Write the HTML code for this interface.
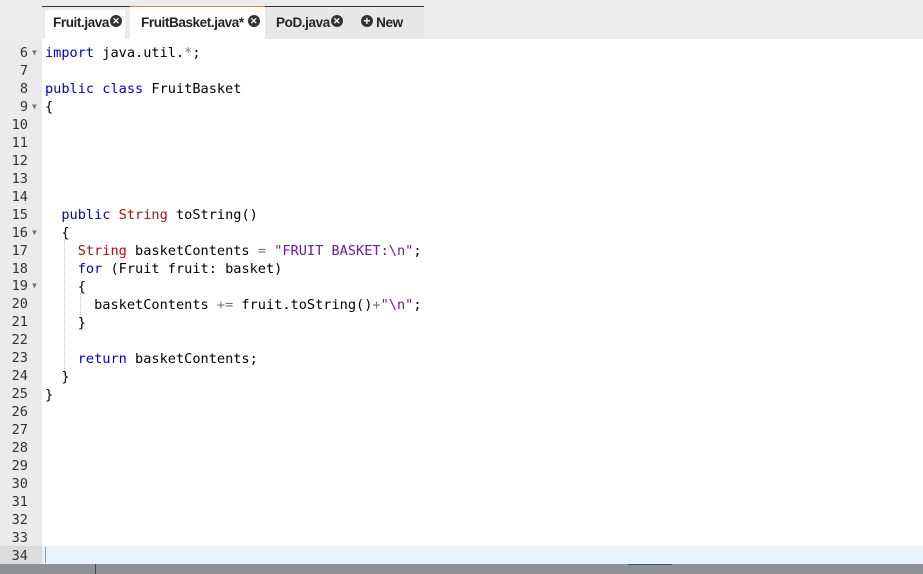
<!DOCTYPE html>
<html><head><style>
*{margin:0;padding:0;box-sizing:border-box}
body{width:923px;height:574px;overflow:hidden;background:#fff;position:relative;font-family:"DejaVu Sans Mono",monospace}
#top{position:absolute;left:0;top:0;width:923px;height:39px;background:#ececec}
#tline{position:absolute;left:42px;top:6px;width:382px;height:1px;background:#333}
#oline{position:absolute;left:130px;top:6px;width:135px;height:2px;background:#e0823c}
.tab{position:absolute;font-family:"Liberation Sans",sans-serif;font-weight:bold;font-size:13.5px;color:#222;top:7px;height:32px;line-height:31px;padding-left:10px;white-space:nowrap;letter-spacing:-0.4px}
.x{display:inline-block;width:12px;height:12px;border-radius:50%;background:#333;color:#fff;font-size:9px;line-height:12px;text-align:center;vertical-align:middle;position:relative;top:-2px;margin-left:1px;letter-spacing:0}
#gut{position:absolute;left:0;top:39px;width:42px;height:525px;background:#ebebeb}
.ln{position:absolute;left:0;width:28px;height:18px;font-size:13.6px;line-height:18px;color:#333;text-align:right;font-family:"DejaVu Sans Mono",monospace}
.f{position:absolute;left:32px;font-size:8px;color:#777;line-height:18px;height:18px}
.cl{position:absolute;left:45px;height:18px;font-size:13.6px;line-height:18px;white-space:pre;color:#000}
.k{color:#0000cc}.t{color:#a31515}.s{color:#6a1f8a}.o{color:#687687}
#cur{position:absolute;left:42px;top:546px;width:881px;height:18px;background:#e8f2fe}
#bot{position:absolute;left:0;top:564px;width:923px;height:10px;background:#8e9294}
</style></head><body>
<div id="top"></div>
<div id="tline"></div><div id="oline"></div>
<div class="tab" style="left:45px;width:80px;top:10px;height:29px;line-height:25px;background:#fff;padding-left:8px">Fruit.java<span class="x">✕</span></div>
<div class="tab" style="left:130px;width:135px;background:#fff;padding-left:11px">FruitBasket.java*<span class="x" style="margin-left:4px">✕</span></div>
<div class="tab" style="left:265px;width:159px;background:#e8e8e8;padding-left:11px">PoD.java<span class="x">✕</span><span class="x" style="margin-left:18px;font-size:12px">+</span> New</div>
<div id="gut"></div>
<div id="cur"></div>
<div style="position:absolute;left:0;top:546px;width:42px;height:18px;background:#dcdcdc"></div>
<div style="position:absolute;left:45px;top:547px;width:1px;height:16px;background:#999"></div>
<div style="position:absolute;left:64px;top:239px;width:1px;height:136px;border-left:1px dotted #ccc"></div>
<div style="position:absolute;left:80px;top:293px;width:1px;height:28px;border-left:1px dotted #ccc"></div>
<div id="lines"></div>
<div class="cl" style="top:44px"><span class="k">import</span> java.util.<span class="o">*</span>;</div>
<div class="cl" style="top:80px"><span class="k">public</span> <span class="k">class</span> FruitBasket</div>
<div class="cl" style="top:98px">{</div>
<div class="cl" style="top:206px">  <span class="k">public</span> <span class="t">String</span> toString()</div>
<div class="cl" style="top:224px">  {</div>
<div class="cl" style="top:242px">    <span class="t">String</span> basketContents <span class="o">=</span> <span class="s">"FRUIT BASKET:\n"</span>;</div>
<div class="cl" style="top:260px">    <span class="k">for</span> (Fruit fruit: basket)</div>
<div class="cl" style="top:278px">    {</div>
<div class="cl" style="top:296px">      basketContents <span class="o">+=</span> fruit.toString()<span class="o">+</span><span class="s">"\n"</span>;</div>
<div class="cl" style="top:314px">    }</div>
<div class="cl" style="top:350px">    <span class="k">return</span> basketContents;</div>
<div class="cl" style="top:368px">  }</div>
<div class="cl" style="top:386px">}</div>
<div id="bot"></div>
<div style="position:absolute;left:95px;top:564px;width:1px;height:10px;background:#444"></div>
<div style="position:absolute;left:628px;top:564px;width:44px;height:1px;background:#3a5a8c"></div>
<script>
var f=[6,9,16,19],h='';
for(var i=6;i<=34;i++){var y=44+(i-6)*17.96;h+='<div class="ln" style="top:'+y+'px">'+i+'</div>'+(f.indexOf(i)>=0?'<div class="f" style="top:'+y+'px">▼</div>':'');}
document.getElementById('lines').innerHTML=h;
</script>
</body></html>
